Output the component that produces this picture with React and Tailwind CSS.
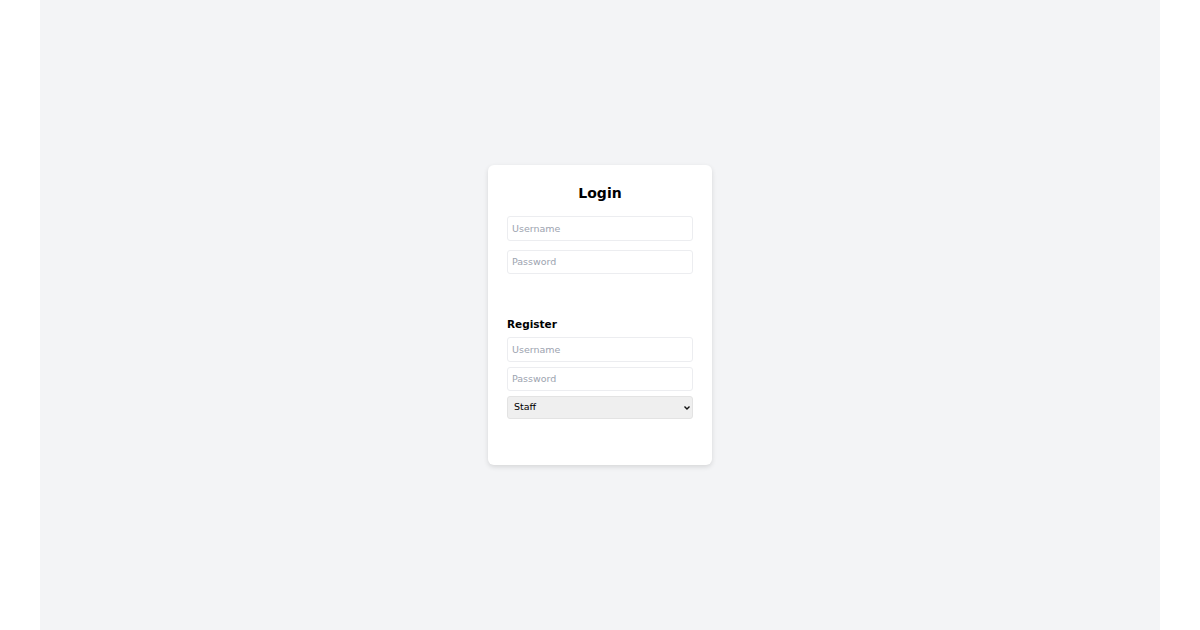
import React from "react";

export default function App() {
  const inputCls =
    "block w-full h-[24.5px] rounded-[3px] border border-[#ecedf0] bg-white px-[4px] text-[9.5px] text-gray-900 placeholder:text-[#9ca3af] outline-none";
  return (
    <div className="w-full h-[630px] bg-white flex justify-center" style={{ fontFamily: '"DejaVu Sans", sans-serif' }}>
      <div className="w-[1120px] h-full bg-[#f3f4f6] flex items-center justify-center">
        <div className="w-[224px] h-[300px] bg-white rounded-[6px] shadow-[0_2px_5px_rgba(0,0,0,0.12)] px-[19px] pt-[19px]">
          <h1 className="text-[14px] leading-[19px] font-bold text-center text-black">Login</h1>
          <div className="mt-[13px] flex flex-col gap-[9px]">
            <input className={inputCls} placeholder="Username" />
            <input className={inputCls} type="password" placeholder="Password" />
          </div>
          <h2 className="mt-[43px] text-[10.5px] leading-[15px] font-bold text-black">Register</h2>
          <div className="mt-[5px] flex flex-col gap-[5px]">
            <input className={inputCls} placeholder="Username" />
            <input className={inputCls} type="password" placeholder="Password" />
            <div className="relative">
              <select className="block w-full h-[22.5px] appearance-none rounded-[3px] border border-[#e3e3e3] bg-[#efefef] pl-[6px] text-[9.5px] text-black outline-none">
                <option>Staff</option>
                <option>Admin</option>
              </select>
              <svg className="absolute right-[3px] top-[10px] pointer-events-none" width="6" height="4" viewBox="0 0 6 4">
                <path d="M0.5 0.5 L3 3 L5.5 0.5" fill="none" stroke="#111" strokeWidth="1.4" />
              </svg>
            </div>
          </div>
        </div>
      </div>
    </div>
  );
}
